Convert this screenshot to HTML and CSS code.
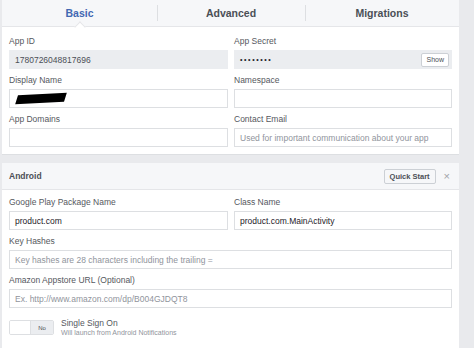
FILE: index.html
```html
<!DOCTYPE html>
<html lang="en">
<head>
  <meta charset="UTF-8" />
  <title>App Settings</title>
  <link rel="stylesheet" href="styles.css">
</head>
<body>
  <div class="page">
    <div class="panel">
      <div class="tabs">
        <div class="tab active">Basic</div>
        <div class="tab">Advanced</div>
        <div class="tab">Migrations</div>
      </div>
      <div class="form">
        <div class="field">
          <label>App ID</label>
          <div class="input disabled">1780726048817696</div>
        </div>
        <div class="field">
          <label>App Secret</label>
          <div class="input disabled secret">
            <span class="dots">&bull;&bull;&bull;&bull;&bull;&bull;&bull;&bull;</span>
            <button class="btn small">Show</button>
          </div>
        </div>
        <div class="field">
          <label>Display Name</label>
          <div class="input"><span class="redacted"></span></div>
        </div>
        <div class="field">
          <label>Namespace</label>
          <div class="input"></div>
        </div>
        <div class="field">
          <label>App Domains</label>
          <div class="input"></div>
        </div>
        <div class="field">
          <label>Contact Email</label>
          <div class="input placeholder">Used for important communication about your app</div>
        </div>
      </div>
    </div>

    <div class="panel">
      <div class="panel-head">
        <span class="head-title">Android</span>
        <div class="head-actions">
          <button class="btn">Quick Start</button>
          <span class="close">&times;</span>
        </div>
      </div>
      <div class="form">
        <div class="field">
          <label>Google Play Package Name</label>
          <div class="input">product.com</div>
        </div>
        <div class="field">
          <label>Class Name</label>
          <div class="input">product.com.MainActivity</div>
        </div>
        <div class="field wide">
          <label>Key Hashes</label>
          <div class="input placeholder">Key hashes are 28 characters including the trailing =</div>
        </div>
        <div class="field wide">
          <label>Amazon Appstore URL (Optional)</label>
          <div class="input placeholder">Ex. http://www.amazon.com/dp/B004GJDQT8</div>
        </div>
        <div class="toggle-row wide">
          <div class="toggle">
            <span class="toggle-off"></span>
            <span class="toggle-no">No</span>
          </div>
          <div class="toggle-text">
            <div class="toggle-title">Single Sign On</div>
            <div class="toggle-sub">Will launch from Android Notifications</div>
          </div>
        </div>
      </div>
    </div>
  </div>
</body>
</html>
```

FILE: styles.css
```css
body {
  margin: 0;
  background: #e9eaed;
  font-family: "Liberation Sans", Arial, sans-serif;
  color: #4b4f56;
}

.page {
  width: 457px;
  margin-left: 2px;
  display: flex;
  flex-direction: column;
  gap: 8px;
}

.panel {
  background: #fff;
  border-bottom: 1px solid #dddfe2;
}

.tabs {
  display: flex;
  height: 26px;
  background: #f6f7f9;
  border-bottom: 1px solid #e5e6e9;
  margin-bottom: 2px;
}

.tab {
  flex: 1;
  display: flex;
  align-items: center;
  justify-content: center;
  font-size: 10.5px;
  font-weight: bold;
  color: #4b4f56;
  position: relative;
}

.tab + .tab::before {
  content: "";
  position: absolute;
  left: 0;
  top: 5px;
  bottom: 5px;
  border-left: 1px solid #dddfe2;
}

.tab.active {
  color: #4267b2;
  flex: 0 0 155px;
}

.tab:last-child {
  flex: 0 0 154px;
}

.tab.active::after {
  content: "";
  position: absolute;
  left: 50%;
  bottom: -5px;
  margin-left: -4px;
  width: 7px;
  height: 7px;
  background: #fff;
  border-left: 1px solid #e5e6e9;
  border-top: 1px solid #e5e6e9;
  transform: rotate(45deg);
}

.form {
  display: grid;
  grid-template-columns: 219px 218px;
  column-gap: 6px;
  row-gap: 6px;
  padding: 7px;
}

.field.wide,
.toggle-row.wide {
  grid-column: 1 / 3;
}

label {
  display: block;
  font-size: 8.5px;
  line-height: 10px;
  margin-bottom: 4px;
  color: #55585e;
}

.input {
  box-sizing: border-box;
  height: 19px;
  border: 1px solid #dddfe2;
  background: #fff;
  display: flex;
  align-items: center;
  padding: 0 5px;
  font-size: 8.5px;
  color: #1d2129;
  overflow: hidden;
  white-space: nowrap;
}

.input.disabled {
  background: #ebedf0;
  border-color: #ebedf0;
  color: #4b4f56;
}

.input.placeholder {
  color: #90949c;
}

.secret {
  justify-content: space-between;
  padding-right: 2px;
}

.dots {
  font-size: 7px;
  letter-spacing: 1.6px;
  color: #1d2129;
}

.redacted {
  display: block;
  width: 48px;
  height: 9px;
  background: #000;
  transform: skewX(-20deg) rotate(-3deg);
  margin-left: 2px;
}

.btn {
  font-family: inherit;
  font-weight: bold;
  font-size: 7.5px;
  color: #4b4f56;
  background: #f6f7f9;
  border: 1px solid #ccd0d5;
  border-radius: 2px;
  padding: 0 5px;
  height: 15px;
}

.btn.small {
  height: 14px;
  font-weight: normal;
  background: #fff;
  padding: 0 4px;
  font-size: 7px;
}

.panel-head {
  display: flex;
  align-items: center;
  justify-content: space-between;
  height: 26px;
  padding: 0 7px;
  background: #f6f7f9;
  border-bottom: 1px solid #e5e6e9;
}

.head-title {
  font-weight: bold;
  font-size: 8.5px;
  color: #4b4f56;
}

.head-actions {
  display: flex;
  align-items: center;
  gap: 8px;
}

.close {
  color: #a0a3a8;
  font-size: 11px;
  line-height: 1;
  margin-right: 2px;
}

.toggle-row {
  display: flex;
  align-items: center;
  gap: 7px;
  margin-top: 4px;
  margin-bottom: 7px;
}

.toggle {
  display: flex;
  width: 45px;
  height: 15px;
  border: 1px solid #dddfe2;
  border-radius: 2px;
  box-sizing: border-box;
  overflow: hidden;
}

.toggle-off {
  flex: 1;
  background: #fff;
}

.toggle-no {
  width: 22px;
  background: #ebedf0;
  border-left: 1px solid #dddfe2;
  font-size: 6px;
  display: flex;
  align-items: center;
  justify-content: center;
  color: #4b4f56;
}

.toggle-title {
  font-size: 8.5px;
  color: #55585e;
  line-height: 10px;
}

.toggle-sub {
  font-size: 7px;
  color: #90949c;
  line-height: 9px;
}
```
